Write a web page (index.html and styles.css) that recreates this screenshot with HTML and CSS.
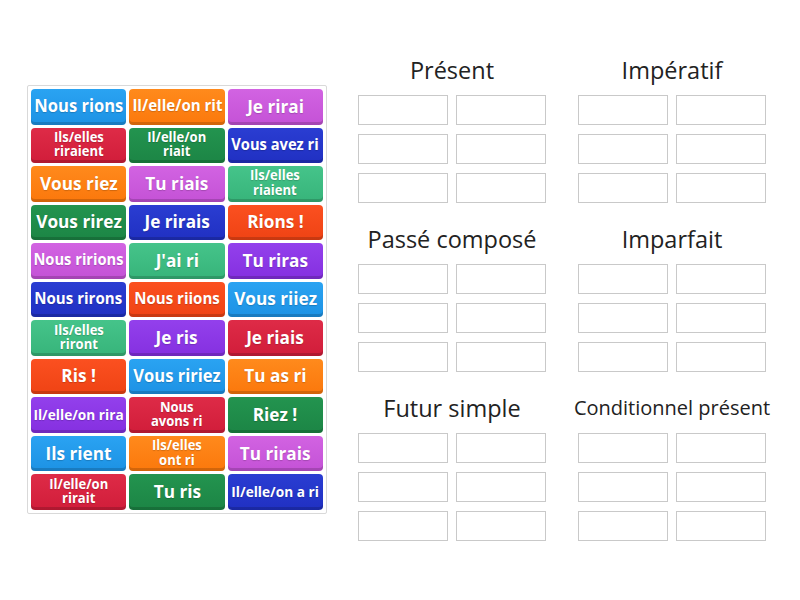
FILE: index.html
```html
<!DOCTYPE html>
<html lang="fr">
<head>
    <meta charset="UTF-8">
    <title>Rire - conjugaison</title>
    <link rel="stylesheet" href="styles.css">
</head>
<body>
    <div class="page">
        <div class="panel">
            <div class="tiles">
                <div class="tile blue fs-a"><span class="label">Nous rions</span></div>
                <div class="tile orange fs-b"><span class="label">Il/elle/on rit</span></div>
                <div class="tile pink"><span class="label">Je rirai</span></div>

                <div class="tile red two"><span class="label">Ils/elles<br>riraient</span></div>
                <div class="tile green two"><span class="label">Il/elle/on<br>riait</span></div>
                <div class="tile navy fs-c"><span class="label">Vous avez ri</span></div>

                <div class="tile orange"><span class="label">Vous riez</span></div>
                <div class="tile pink"><span class="label">Tu riais</span></div>
                <div class="tile teal two"><span class="label">Ils/elles<br>riaient</span></div>

                <div class="tile green"><span class="label">Vous rirez</span></div>
                <div class="tile navy"><span class="label">Je rirais</span></div>
                <div class="tile flame"><span class="label">Rions !</span></div>

                <div class="tile pink fs-c"><span class="label">Nous ririons</span></div>
                <div class="tile teal"><span class="label">J'ai ri</span></div>
                <div class="tile violet"><span class="label">Tu riras</span></div>

                <div class="tile navy fs-b"><span class="label">Nous rirons</span></div>
                <div class="tile flame fs-b"><span class="label">Nous riions</span></div>
                <div class="tile blue"><span class="label">Vous riiez</span></div>

                <div class="tile teal two"><span class="label">Ils/elles<br>riront</span></div>
                <div class="tile violet"><span class="label">Je ris</span></div>
                <div class="tile red"><span class="label">Je riais</span></div>

                <div class="tile flame"><span class="label">Ris !</span></div>
                <div class="tile blue fs-a"><span class="label">Vous ririez</span></div>
                <div class="tile orange"><span class="label">Tu as ri</span></div>

                <div class="tile violet fs-d"><span class="label">Il/elle/on rira</span></div>
                <div class="tile red two"><span class="label">Nous<br>avons ri</span></div>
                <div class="tile green"><span class="label">Riez !</span></div>

                <div class="tile blue"><span class="label">Ils rient</span></div>
                <div class="tile orange two"><span class="label">Ils/elles<br>ont ri</span></div>
                <div class="tile pink"><span class="label">Tu rirais</span></div>

                <div class="tile red two"><span class="label">Il/elle/on<br>rirait</span></div>
                <div class="tile green"><span class="label">Tu ris</span></div>
                <div class="tile navy fs-d"><span class="label">Il/elle/on a ri</span></div>
            </div>
        </div>

        <div class="groups">
            <div class="group">
                <div class="group-title">Présent</div>
                <div class="slots">
                    <div class="slot"></div><div class="slot"></div>
                    <div class="slot"></div><div class="slot"></div>
                    <div class="slot"></div><div class="slot"></div>
                </div>
            </div>
            <div class="group">
                <div class="group-title">Impératif</div>
                <div class="slots">
                    <div class="slot"></div><div class="slot"></div>
                    <div class="slot"></div><div class="slot"></div>
                    <div class="slot"></div><div class="slot"></div>
                </div>
            </div>
            <div class="group">
                <div class="group-title">Passé composé</div>
                <div class="slots">
                    <div class="slot"></div><div class="slot"></div>
                    <div class="slot"></div><div class="slot"></div>
                    <div class="slot"></div><div class="slot"></div>
                </div>
            </div>
            <div class="group">
                <div class="group-title">Imparfait</div>
                <div class="slots">
                    <div class="slot"></div><div class="slot"></div>
                    <div class="slot"></div><div class="slot"></div>
                    <div class="slot"></div><div class="slot"></div>
                </div>
            </div>
            <div class="group">
                <div class="group-title">Futur simple</div>
                <div class="slots">
                    <div class="slot"></div><div class="slot"></div>
                    <div class="slot"></div><div class="slot"></div>
                    <div class="slot"></div><div class="slot"></div>
                </div>
            </div>
            <div class="group">
                <div class="group-title small">Conditionnel présent</div>
                <div class="slots">
                    <div class="slot"></div><div class="slot"></div>
                    <div class="slot"></div><div class="slot"></div>
                    <div class="slot"></div><div class="slot"></div>
                </div>
            </div>
        </div>
    </div>
</body>
</html>
```

FILE: styles.css
```css
body {
    margin: 0;
    background-color: #ffffff;
    font-family: 'Open Sans', 'Noto Sans', sans-serif;
    color: #222;
}
.page {
    display: flex;
    align-items: flex-start;
    gap: 31px;
    padding: 55px 0 0 27px;
}

/* tile pool */
.panel {
    width: 300px;
    box-sizing: border-box;
    margin-top: 30px;
    padding: 3px;
    border: 1px solid #d9d9d9;
    border-radius: 2px;
}
.tiles {
    display: grid;
    grid-template-columns: repeat(3, minmax(0, 1fr));
    grid-template-rows: repeat(11, minmax(0, 1fr));
    gap: 3px;
    height: 421px;
}
.tile {
    display: flex;
    align-items: center;
    justify-content: center;
    text-align: center;
    color: #fff;
    font-size: 18.5px;
    font-weight: 700;
    line-height: 1.1;
    white-space: nowrap;
    border-radius: 4px;
    padding-bottom: 2px;
    box-sizing: border-box;
    box-shadow: inset 0 -3px 0 rgba(0, 0, 0, 0.16);
    text-shadow: 0 1px 1px rgba(0, 0, 0, 0.18);
}
/* labels are squeezed a little, like the canvas text of the game */
.label {
    display: inline-block;
    transform: scaleX(0.93);
}
.fs-a { font-size: 17.8px; }
.fs-b { font-size: 16.2px; }
.fs-c { font-size: 15.8px; }
.fs-d { font-size: 14.7px; }
.two {
    font-size: 14px;
    line-height: 1.03;
}

.blue   { background: linear-gradient(#2aa3f2, #1d92e4); }
.orange { background: linear-gradient(#ff8a1c, #fb780c); }
.pink   { background: linear-gradient(#d263e2, #c452d6); }
.red    { background: linear-gradient(#de2b47, #d11d3a); }
.green  { background: linear-gradient(#23944f, #1c8545); }
.navy   { background: linear-gradient(#2a3dd2, #2030c2); }
.teal   { background: linear-gradient(#45c48a, #37b47a); }
.flame  { background: linear-gradient(#fb5020, #ef4314); }
.violet { background: linear-gradient(#9340ec, #8530e0); }

/* target groups */
.groups {
    display: grid;
    grid-template-columns: 188px 188px;
    column-gap: 32px;
    row-gap: 21px;
}
.group-title {
    font-size: 23.5px;
    line-height: 30px;
    text-align: center;
    white-space: nowrap;
    margin: 0 -20px 10px;
}
.group-title.small {
    font-size: 20px;
}
.slots {
    display: grid;
    grid-template-columns: 90px 90px;
    grid-auto-rows: 30px;
    column-gap: 8px;
    row-gap: 9px;
}
.slot {
    border: 1px solid #c9c9c9;
    background-color: #fff;
}
```
